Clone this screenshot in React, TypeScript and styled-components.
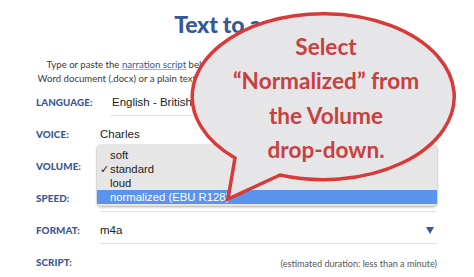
import React from "react";
import styled, { createGlobalStyle } from "styled-components";

const Global = createGlobalStyle`
  html, body { margin: 0; padding: 0; background: #ffffff; }
  body { width: 474px; height: 277px; overflow: hidden; }
`;

const Page = styled.div`
  position: relative;
  width: 474px;
  height: 277px;
  overflow: hidden;
  background: #fff;
  font-family: Lato, "Open Sans", sans-serif;
`;

const Title = styled.h1`
  margin: 0;
  padding: 10px 0 0 6px;
  height: 34px;
  text-align: center;
  font-family: Lato, sans-serif;
  font-weight: 900;
  font-size: 23px;
  line-height: 28px;
  color: #37579a;
  letter-spacing: -0.2px;
`;

const Intro = styled.p`
  margin: 14px 0 0;
  text-align: center;
  white-space: nowrap;
  font-family: Lato, sans-serif;
  font-size: 9.6px;
  line-height: 14px;
  color: #3a3a3a;
`;

const Link = styled.span`
  color: #37579a;
  text-decoration: underline;
  text-decoration-color: #9fb0d2;
`;

const Form = styled.div`
  padding: 0 37px 0 36px;
  display: flex;
  flex-direction: column;
`;

const Row = styled.div`
  display: grid;
  grid-template-columns: 64px 1fr;
  align-items: center;
  height: 32px;
`;

const Label = styled.div`
  font-family: Lato, sans-serif;
  font-weight: 900;
  font-size: 9.8px;
  color: #37579a;
  letter-spacing: 0.1px;
`;

const Field = styled.div<{ $indent?: number }>`
  position: relative;
  height: 27px;
  margin-left: ${(p) => p.$indent ?? 0}px;
  padding-left: ${(p) => (p.$indent ? 2 : 0)}px;
  display: flex;
  align-items: center;
  border-bottom: 1px solid #e2e2e2;
  font-family: "Liberation Sans", Arial, sans-serif;
  font-size: 11.5px;
  color: #222;
`;

const Caret = styled.span`
  position: absolute;
  right: 3px;
  top: 11px;
  width: 0;
  height: 0;
  border-left: 4px solid transparent;
  border-right: 4px solid transparent;
  border-top: 7px solid #37579a;
`;

const Estimate = styled.div`
  text-align: right;
  font-family: Lato, sans-serif;
  font-size: 9.1px;
  color: #555;
  padding-top: 2px;
`;

const ScriptBox = styled.div`
  margin: -1px 37px 0 36px;
  height: 20px;
  border-top: 2px solid #cfcfcf;
`;

const Menu = styled.ul`
  position: absolute;
  left: 97px;
  top: 145px;
  width: 340px;
  margin: 0;
  padding: 3px 0 2px;
  list-style: none;
  background: #e6e6e7;
  border-radius: 4px;
  box-shadow: 0 1px 3px rgba(0, 0, 0, 0.28), 0 0 0 0.5px rgba(0, 0, 0, 0.12);
  font-family: "Liberation Sans", Arial, sans-serif;
  font-size: 11.3px;
`;

const Item = styled.li<{ $active?: boolean }>`
  position: relative;
  height: 14px;
  line-height: 14px;
  padding-left: 13px;
  color: ${(p) => (p.$active ? "#ffffff" : "#1d1d1d")};
  background: ${(p) => (p.$active ? "#5b94ee" : "transparent")};
`;

const Check = styled.span`
  position: absolute;
  left: 3px;
  top: 0;
  font-size: 11px;
`;

const Callout = styled.div`
  position: absolute;
  left: 190px;
  top: 8px;
  width: 272px;
  height: 196px;
`;

const Bubble = styled.svg`
  position: absolute;
  left: 0;
  top: 0;
  width: 272px;
  height: 196px;
`;

const CalloutText = styled.div`
  position: absolute;
  left: 0;
  top: 22px;
  width: 272px;
  text-align: center;
  font-family: Lato, sans-serif;
  font-weight: 700;
  font-size: 22.6px;
  line-height: 34.3px;
  color: #c8403f;
  white-space: nowrap;
`;

export default function App() {
  return (
    <>
      <Global />
      <Page>
        <Title>Text to audio</Title>
        <Intro>
          Type or paste the <Link>narration script</Link> below, or upload a file that has your script, as a Microsoft
          <br />
          Word document (.docx) or a plain text file (.txt), up to the maximum of ten thousand characters.
        </Intro>
        <Form>
          <Row>
            <Label>LANGUAGE:</Label>
            <Field $indent={10}>English - British</Field>
          </Row>
          <Row>
            <Label>VOICE:</Label>
            <Field>Charles</Field>
          </Row>
          <Row>
            <Label>VOLUME:</Label>
            <Field />
          </Row>
          <Row>
            <Label>SPEED:</Label>
            <Field />
          </Row>
          <Row>
            <Label>FORMAT:</Label>
            <Field>
              m4a
              <Caret />
            </Field>
          </Row>
          <Row>
            <Label>SCRIPT:</Label>
            <Estimate>(estimated duration: less than a minute)</Estimate>
          </Row>
        </Form>
        <ScriptBox />
        <Menu>
          <Item>soft</Item>
          <Item>
            <Check>✓</Check>standard
          </Item>
          <Item>loud</Item>
          <Item $active>normalized (EBU R128)</Item>
        </Menu>
        <Callout>
          <Bubble viewBox="190 8 272 196">
            <path
              d="M 235 158 L 228 199 L 280 175 A 131 83 0 1 0 235 158 Z"
              fill="#e6e6e8"
              stroke="#d83a3a"
              strokeWidth="3.5"
              strokeLinejoin="miter"
            />
          </Bubble>
          <CalloutText>
            Select
            <br />
            “Normalized” from
            <br />
            the Volume
            <br />
            drop-down.
          </CalloutText>
        </Callout>
      </Page>
    </>
  );
}
